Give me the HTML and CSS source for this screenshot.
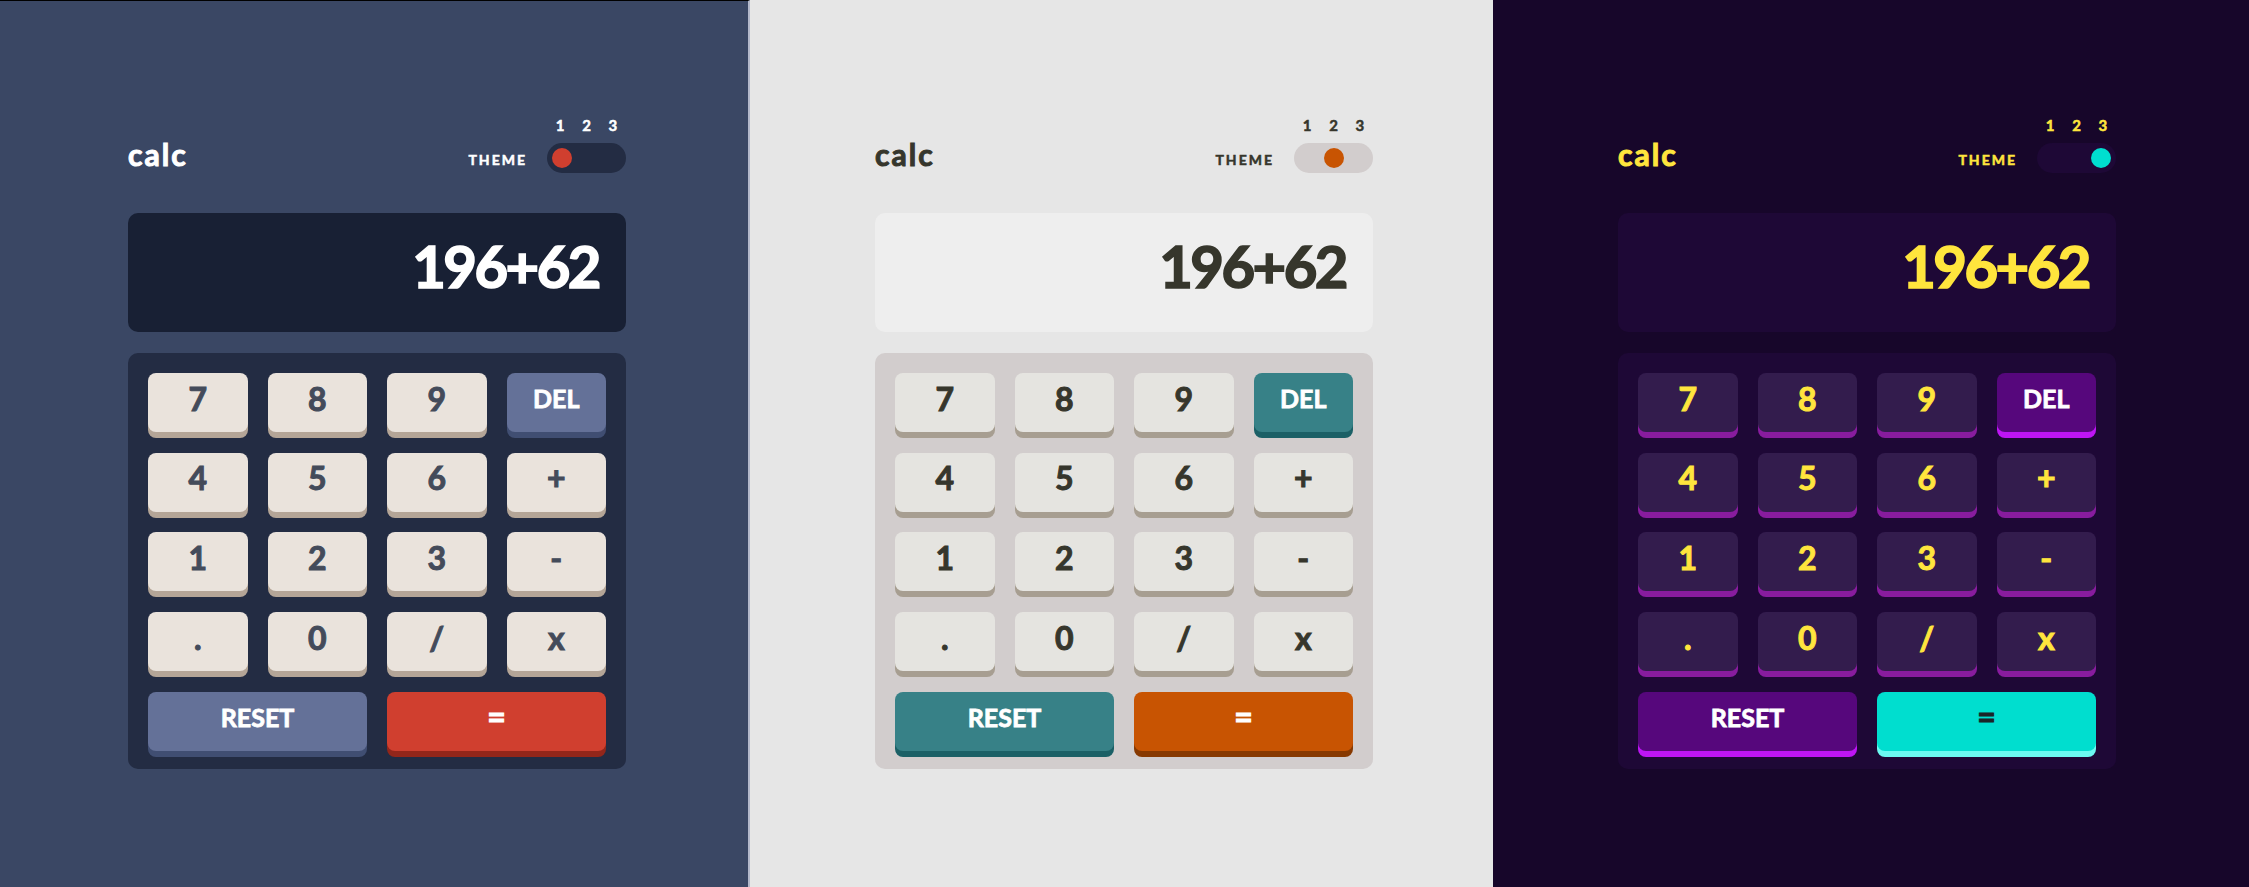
FILE: index.html
```html
<!DOCTYPE html>
<html lang="en">
<head>
<meta charset="utf-8">
<title>Calculator themes</title>
<link rel="stylesheet" href="styles.css">
</head>
<body>
<main class="panels">
  <section class="panel theme1">
    <div class="calc">
      <header class="header">
        <h1 class="logo">calc</h1>
        <div class="theme">
          <span class="theme-label">THEME</span>
          <div class="switch">
            <div class="nums"><span>1</span><span>2</span><span>3</span></div>
            <div class="track pos1"><span class="knob"></span></div>
          </div>
        </div>
      </header>
      <div class="screen">196+62</div>
      <div class="keypad">
        <button class="key">7</button><button class="key">8</button><button class="key">9</button><button class="key func">DEL</button>
        <button class="key">4</button><button class="key">5</button><button class="key">6</button><button class="key">+</button>
        <button class="key">1</button><button class="key">2</button><button class="key">3</button><button class="key">-</button>
        <button class="key">.</button><button class="key">0</button><button class="key">/</button><button class="key">x</button>
        <button class="key func wide">RESET</button><button class="key eq wide">=</button>
      </div>
    </div>
  </section>
  <section class="panel theme2">
    <div class="calc">
      <header class="header">
        <h1 class="logo">calc</h1>
        <div class="theme">
          <span class="theme-label">THEME</span>
          <div class="switch">
            <div class="nums"><span>1</span><span>2</span><span>3</span></div>
            <div class="track pos2"><span class="knob"></span></div>
          </div>
        </div>
      </header>
      <div class="screen">196+62</div>
      <div class="keypad">
        <button class="key">7</button><button class="key">8</button><button class="key">9</button><button class="key func">DEL</button>
        <button class="key">4</button><button class="key">5</button><button class="key">6</button><button class="key">+</button>
        <button class="key">1</button><button class="key">2</button><button class="key">3</button><button class="key">-</button>
        <button class="key">.</button><button class="key">0</button><button class="key">/</button><button class="key">x</button>
        <button class="key func wide">RESET</button><button class="key eq wide">=</button>
      </div>
    </div>
  </section>
  <section class="panel theme3">
    <div class="calc">
      <header class="header">
        <h1 class="logo">calc</h1>
        <div class="theme">
          <span class="theme-label">THEME</span>
          <div class="switch">
            <div class="nums"><span>1</span><span>2</span><span>3</span></div>
            <div class="track pos3"><span class="knob"></span></div>
          </div>
        </div>
      </header>
      <div class="screen">196+62</div>
      <div class="keypad">
        <button class="key">7</button><button class="key">8</button><button class="key">9</button><button class="key func">DEL</button>
        <button class="key">4</button><button class="key">5</button><button class="key">6</button><button class="key">+</button>
        <button class="key">1</button><button class="key">2</button><button class="key">3</button><button class="key">-</button>
        <button class="key">.</button><button class="key">0</button><button class="key">/</button><button class="key">x</button>
        <button class="key func wide">RESET</button><button class="key eq wide">=</button>
      </div>
    </div>
  </section>
</main>
</body>
</html>
```
FILE: styles.css
```css
* {
  box-sizing: border-box;
  margin: 0;
  padding: 0;
}

body {
  margin: 0;
  width: 2249px;
  height: 887px;
  overflow: hidden;
  font-family: "Lato", "Liberation Sans", sans-serif;
}

.panels {
  display: flex;
  height: 887px;
}

.panel {
  height: 887px;
  padding-top: 118px;
  padding-left: 125px;
  background: var(--bg);
}

.theme1 {
  --bg: #3a4764;
  --keypad: #232c43;
  --screen: #182034;
  --head: #ffffff;
  --screen-text: #ffffff;
  --key: #eae3dc;
  --key-shadow: #b4a597;
  --key-text: #444b5a;
  --func: #647198;
  --func-shadow: #404e72;
  --func-text: #ffffff;
  --eq: #d03f2f;
  --eq-shadow: #93261a;
  --eq-text: #ffffff;
  --knob: #d03f2f;
  width: 750px;
  border-top: 1px solid #000;
  border-right: 2px solid #b3b8ca;
  padding-top: 117px;
  padding-left: 128px;
}

.theme2 {
  --bg: #e6e6e6;
  --keypad: #d2cdcd;
  --screen: #eeeeee;
  --head: #36362c;
  --screen-text: #36362c;
  --key: #e5e4e0;
  --key-shadow: #a79e91;
  --key-text: #36362c;
  --func: #378187;
  --func-shadow: #1b6066;
  --func-text: #ffffff;
  --eq: #c85402;
  --eq-shadow: #873901;
  --eq-text: #ffffff;
  --knob: #c85402;
  width: 743px;
}

.theme3 {
  --bg: #17062a;
  --keypad: #1e0836;
  --screen: #1e0836;
  --head: #ffe53d;
  --screen-text: #ffe53d;
  --key: #331c4d;
  --key-shadow: #881c9e;
  --key-text: #ffe53d;
  --func: #56077c;
  --func-shadow: #be15f4;
  --func-text: #ffffff;
  --eq: #00decf;
  --eq-shadow: #6cf9f1;
  --eq-text: #1b2428;
  --knob: #00decf;
  flex: 1;
}

.calc {
  width: 498px;
}

.header {
  display: flex;
  justify-content: space-between;
  align-items: flex-end;
  color: var(--head);
}

.logo {
  font-size: 30px;
  line-height: 1;
  font-weight: 700;
  letter-spacing: 2px;
  margin-bottom: 4px;
  -webkit-text-stroke: 1px currentColor;
}

.theme {
  display: flex;
  align-items: flex-end;
  gap: 20px;
}

.theme-label {
  font-size: 14px;
  font-weight: 700;
  letter-spacing: 2px;
  line-height: 27px;
  padding-top: 3px;
  -webkit-text-stroke: 0.5px currentColor;
}

.switch {
  width: 79px;
  display: flex;
  flex-direction: column;
}

.nums {
  display: grid;
  grid-template-columns: repeat(3, 1fr);
  text-align: center;
  font-size: 15px;
  line-height: 15px;
  font-weight: 700;
  margin-bottom: 10px;
  -webkit-text-stroke: 0.5px currentColor;
}

.track {
  height: 30px;
  border-radius: 15px;
  background: var(--keypad);
  display: flex;
  align-items: center;
  padding: 0 5px;
}

.pos1 { justify-content: flex-start; }
.pos2 { justify-content: center; }
.pos3 { justify-content: flex-end; }

.knob {
  width: 20px;
  height: 20px;
  border-radius: 50%;
  background: var(--knob);
}

.screen {
  margin-top: 40px;
  height: 119px;
  border-radius: 10px;
  background: var(--screen);
  color: var(--screen-text);
  font-size: 58px;
  line-height: 58px;
  font-weight: 700;
  letter-spacing: -2.5px;
  text-align: right;
  padding: 24px 27px 37px;
  -webkit-text-stroke: 1.6px currentColor;
}

.keypad {
  margin-top: 21px;
  padding: 20px 20px 18px;
  border-radius: 10px;
  background: var(--keypad);
  display: grid;
  grid-template-columns: repeat(4, 1fr);
  column-gap: 20px;
  row-gap: 20.7px;
}

.key {
  height: 59px;
  border: none;
  border-radius: 8px;
  background: var(--key);
  box-shadow: 0 6px 0 var(--key-shadow);
  color: var(--key-text);
  font-family: "Lato", "Liberation Sans", sans-serif;
  font-size: 32px;
  line-height: 1;
  font-weight: 700;
  display: flex;
  align-items: center;
  justify-content: center;
  padding-bottom: 8px;
  -webkit-text-stroke: 1px currentColor;
}

.key.func {
  background: var(--func);
  box-shadow: 0 6px 0 var(--func-shadow);
  color: var(--func-text);
  font-size: 25px;
  -webkit-text-stroke: 0.8px currentColor;
}

.key.eq {
  background: var(--eq);
  box-shadow: 0 6px 0 var(--eq-shadow);
  color: var(--eq-text);
}

.wide {
  grid-column: span 2;
}
```
